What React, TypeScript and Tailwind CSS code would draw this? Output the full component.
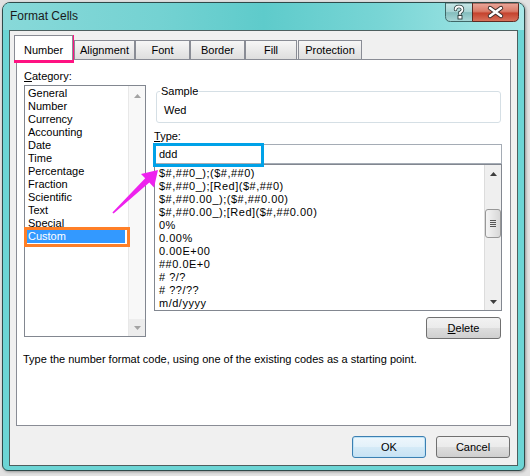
import React from "react";

const categories = [
  "General",
  "Number",
  "Currency",
  "Accounting",
  "Date",
  "Time",
  "Percentage",
  "Fraction",
  "Scientific",
  "Text",
  "Special",
  "Custom",
];

const formats = [
  "$#,##0_);($#,##0)",
  "$#,##0_);[Red]($#,##0)",
  "$#,##0.00_);($#,##0.00)",
  "$#,##0.00_);[Red]($#,##0.00)",
  "0%",
  "0.00%",
  "0.00E+00",
  "##0.0E+0",
  "# ?/?",
  "# ??/??",
  "m/d/yyyy",
];

function UpArrow({ color }: { color: string }) {
  return (
    <svg width="7" height="4" viewBox="0 0 7 4">
      <path d="M0 4 L3.5 0 L7 4 Z" fill={color} />
    </svg>
  );
}

function DownArrow({ color }: { color: string }) {
  return (
    <svg width="7" height="4" viewBox="0 0 7 4">
      <path d="M0 0 L3.5 4 L7 0 Z" fill={color} />
    </svg>
  );
}

function CaptionButtons() {
  return (
    <svg width="74" height="19" viewBox="0 0 74 19">
      <defs>
        <linearGradient id="helpg" x1="0" y1="0" x2="0" y2="1">
          <stop offset="0" stopColor="#c8e8e8" />
          <stop offset="0.48" stopColor="#a6d3d3" />
          <stop offset="0.52" stopColor="#84bdbd" />
          <stop offset="1" stopColor="#a9d8d8" />
        </linearGradient>
        <linearGradient id="closeg" x1="0" y1="0" x2="0" y2="1">
          <stop offset="0" stopColor="#eba99d" />
          <stop offset="0.45" stopColor="#d97b68" />
          <stop offset="0.55" stopColor="#c5432e" />
          <stop offset="1" stopColor="#d9735d" />
        </linearGradient>
      </defs>
      <path d="M0.5 0 V13.5 Q0.5 18.5 5.5 18.5 H27.5 V0 Z" fill="url(#helpg)" stroke="#3f6767" strokeWidth="1" />
      <path d="M27.5 0 V18.5 H68.5 Q73.5 18.5 73.5 13.5 V0 Z" fill="url(#closeg)" stroke="#5d2a22" strokeWidth="1" />
      <path
        d="M10.5 6.5 Q10.5 3.5 14 3.5 Q17.5 3.5 17.5 6.5 Q17.5 8.5 15 9.5 V11"
        fill="none"
        stroke="#2b3b3b"
        strokeWidth="3.4"
        strokeLinecap="round"
      />
      <path
        d="M10.5 6.5 Q10.5 3.5 14 3.5 Q17.5 3.5 17.5 6.5 Q17.5 8.5 15 9.5 V11"
        fill="none"
        stroke="#ffffff"
        strokeWidth="1.8"
        strokeLinecap="round"
      />
      <rect x="13" y="12.5" width="4" height="3.5" fill="#ffffff" stroke="#2b3b3b" strokeWidth="0.9" />
      <path d="M45 5 L56 13 M56 5 L45 13" stroke="#3a2a28" strokeWidth="4.4" strokeLinecap="round" />
      <path d="M45 5 L56 13 M56 5 L45 13" stroke="#ffffff" strokeWidth="2.6" strokeLinecap="round" />
    </svg>
  );
}

export default function App() {
  return (
    <div className="relative h-[476px] w-[530px] overflow-hidden bg-[#e2e2e2] pl-[2px] pt-[2px] font-['Liberation_Sans',Arial,sans-serif] text-[11px] leading-[13px] text-black">
      {/* Window */}
      <div className="flex h-[469px] w-[523px] flex-col overflow-hidden rounded-t-[8px] rounded-b-[6px] border border-[#2f4a4a] bg-[#6cd5d5] px-[6px] pb-[4px] shadow-[1px_1px_3px_rgba(0,0,0,0.35)]">
        {/* Title bar */}
        <div className="-mx-[6px] flex h-[27px] shrink-0 items-start justify-between bg-[#74d2d2] bg-[linear-gradient(90deg,#88d9d9_0%,#74d2d2_30%,#5ecbcb_50%,#78d5d5_72%,#a9e8e8_100%)] pl-[7px] pr-[5px]">
          <div className="pt-[6px] text-[12px] leading-[14px] text-[#1a1a1a]">Format Cells</div>
          <CaptionButtons />
        </div>

        {/* Client area */}
        <div className="flex flex-1 flex-col border border-[#4d5f5f] bg-[#f0f0f0]">
          {/* Tabs */}
          <div className="flex h-[28px] shrink-0 items-end pl-[4px]">
            <div className="relative z-10 -mb-px h-[25px] w-[59px] border border-b-0 border-[#898c95] bg-white pt-[8px] text-center">
              Number
            </div>
            <div className="ml-px flex h-[19px] w-[61px] items-center justify-center border border-b-0 border-[#898c95] bg-[linear-gradient(#f6f6f6,#eaeaea_50%,#dedede)] pt-px">
              Alignment
            </div>
            <div className="flex h-[19px] w-[55px] items-center justify-center border border-b-0 border-[#898c95] bg-[linear-gradient(#f6f6f6,#eaeaea_50%,#dedede)] pt-px">
              Font
            </div>
            <div className="flex h-[19px] w-[55px] items-center justify-center border border-b-0 border-[#898c95] bg-[linear-gradient(#f6f6f6,#eaeaea_50%,#dedede)] pt-px">
              Border
            </div>
            <div className="flex h-[19px] w-[52px] items-center justify-center border border-b-0 border-[#898c95] bg-[linear-gradient(#f6f6f6,#eaeaea_50%,#dedede)] pt-px">
              Fill
            </div>
            <div className="ml-px flex h-[19px] w-[64px] items-center justify-center border border-b-0 border-[#898c95] bg-[linear-gradient(#f6f6f6,#eaeaea_50%,#dedede)] pt-px">
              Protection
            </div>
          </div>

          {/* Tab panel */}
          <div className="ml-[6px] h-[367px] w-[495px] shrink-0 border border-[#898c95] bg-white pl-[7px] pt-[10px]">
            <div className="flex gap-[8px]">
              {/* Category column */}
              <div className="flex w-[122px] flex-col">
                <div className="mb-[2px]">
                  <span className="underline">C</span>ategory:
                </div>
                <div className="flex h-[252px] border border-[#828790]">
                  <div className="flex-1 pt-[1px]">
                    {categories.map((c) => (
                      <div
                        key={c}
                        className={
                          c === "Custom"
                            ? "ml-[1px] h-[13px] w-[99px] bg-[#3399ff] pl-[2px] text-white"
                            : "ml-[1px] h-[13px] w-[99px] pl-[2px]"
                        }
                      >
                        {c}
                      </div>
                    ))}
                  </div>
                  <div className="flex w-[17px] flex-col border-l border-[#e8e8e8] bg-[#f8f8f8]">
                    <div className="flex h-[17px] items-center justify-center pt-[3px]">
                      <UpArrow color="#a3a3a3" />
                    </div>
                    <div className="flex-1" />
                    <div className="flex h-[17px] items-center justify-center bg-[#ededed]">
                      <DownArrow color="#a3a3a3" />
                    </div>
                  </div>
                </div>
              </div>

              {/* Right column */}
              <div className="flex w-[348px] flex-col">
                <fieldset className="ml-[2px] mt-[15px] h-[38px] w-[345px] rounded-[3px] border border-[#d5dfe5] pl-[7px]">
                  <legend className="-ml-[4px] px-[1px] leading-[13px]">Sample</legend>
                  <div className="pt-[6px]">Wed</div>
                </fieldset>
                <div className="mt-[7px]">
                  <span className="underline">T</span>ype:
                </div>
                <div className="mt-[1px] flex h-[20px] items-center border border-[#a5acb5] pl-[4px] pt-px">
                  ddd
                </div>
                <div className="flex h-[147px] border border-[#828790]">
                  <div className="flex-1 pl-[4px] pt-[2px] tracking-[0.5px]">
                    {formats.map((f) => (
                      <div key={f} className="h-[13px] whitespace-nowrap">
                        {f}
                      </div>
                    ))}
                  </div>
                  <div className="flex w-[17px] flex-col border-l border-[#dcdcdc] bg-[#efefef]">
                    <div className="flex h-[17px] items-center justify-center">
                      <UpArrow color="#3d3d3d" />
                    </div>
                    <div className="mt-[27px] flex h-[29px] w-[16px] items-center justify-center rounded-[3px] border border-[#979797] bg-[linear-gradient(90deg,#f4f4f4,#e6e6e6_50%,#d8d8d8)]">
                      <div className="flex w-[6px] flex-col gap-[1px]">
                        <div className="h-px bg-[#555]" />
                        <div className="h-px bg-[#555]" />
                        <div className="h-px bg-[#555]" />
                        <div className="h-px bg-[#555]" />
                      </div>
                    </div>
                    <div className="flex-1" />
                    <div className="flex h-[17px] items-center justify-center">
                      <DownArrow color="#3d3d3d" />
                    </div>
                  </div>
                </div>
                <div className="mr-[1px] mt-[6px] flex h-[22px] w-[75px] items-center justify-center self-end rounded-[3px] border border-[#707070] bg-[linear-gradient(#f2f2f2,#ebebeb_48%,#dddddd_52%,#cfcfcf)]">
                  <span>
                    <span className="underline">D</span>elete
                  </span>
                </div>
              </div>
            </div>
            <div className="-ml-[1px] mt-[14px]">
              Type the number format code, using one of the existing codes as a starting point.
            </div>
          </div>

          {/* Buttons */}
          <div className="mt-[10px] flex justify-end gap-[10px] pr-[7px]">
            <div className="flex h-[22px] w-[74px] items-center justify-center rounded-[3px] border border-[#3c7fb1] bg-[linear-gradient(#eef7fc,#e3f1fa_48%,#d4eaf7_52%,#c8e2f3)] shadow-[inset_0_0_0_1px_#bfe3f7]">
              OK
            </div>
            <div className="flex h-[22px] w-[74px] items-center justify-center rounded-[3px] border border-[#707070] bg-[linear-gradient(#f2f2f2,#ebebeb_48%,#dddddd_52%,#cfcfcf)]">
              Cancel
            </div>
          </div>
        </div>
      </div>

      {/* Annotation boxes */}
      <div className="pointer-events-none absolute left-[14px] top-[35px] h-[28px] w-[60px] border-[3px] border-[#ff1282]" />
      <div className="pointer-events-none absolute left-[24px] top-[227px] h-[20px] w-[106px] border-[3px] border-[#ff7f27]" />
      <div className="pointer-events-none absolute left-[153px] top-[143px] h-[24px] w-[111px] border-[3px] border-[#00a2e8]" />

      {/* Arrow */}
      <svg className="pointer-events-none absolute left-0 top-0" width="530" height="476" viewBox="0 0 530 476">
        <polygon
          points="158,170 154,187.5 149.3,182.6 113.6,213.6 112.4,212.4 145.2,178.2 141,174"
          fill="#ee22ee"
        />
      </svg>
    </div>
  );
}
